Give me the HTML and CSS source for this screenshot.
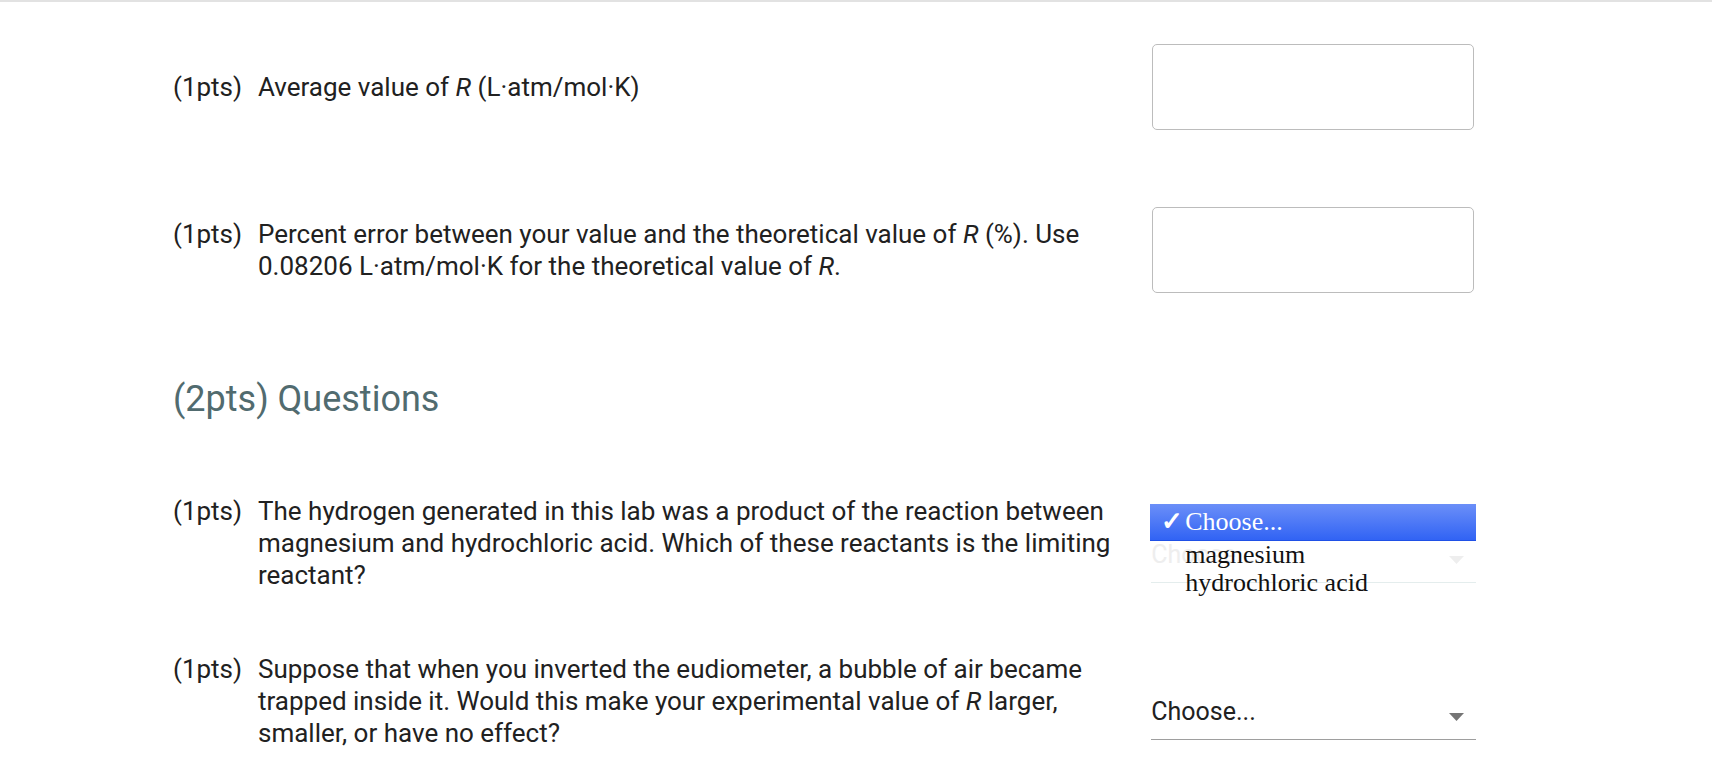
FILE: index.html
```html
<!DOCTYPE html>
<html lang="en">
<head>
  <meta charset="UTF-8">
  <meta name="viewport" content="width=device-width, initial-scale=1.0">
  <title>Lab Report - Molar Gas Constant</title>
  <link rel="stylesheet" href="styles.css">
</head>
<body>
  <div class="report">
    <!-- Calculations -->
    <div class="row row-first">
      <div class="question">
        <span class="points">(1pts)</span>
        <div class="prompt">Average value of <i>R</i> (L·atm/mol·K)</div>
      </div>
      <input type="text" class="answer-input">
    </div>

    <div class="row row-second">
      <div class="question">
        <span class="points">(1pts)</span>
        <div class="prompt">Percent error between your value and the theoretical value of <i>R</i> (%). Use 0.08206 L·atm/mol·K for the theoretical value of <i>R</i>.</div>
      </div>
      <input type="text" class="answer-input">
    </div>

    <!-- Questions -->
    <h2 class="section-title">(2pts) Questions</h2>

    <div class="row row-select row-third">
      <div class="question">
        <span class="points">(1pts)</span>
        <div class="prompt">The hydrogen generated in this lab was a product of the reaction between magnesium and hydrochloric acid. Which of these reactants is the limiting reactant?</div>
      </div>
      <div class="select select-open">
        <span class="select-value">Choose...</span>
        <svg class="select-arrow" width="15" height="8" viewBox="0 0 15 8"><path d="M0 0H15L7.5 8Z"/></svg>
        <div class="select-menu">
          <div class="menu-option menu-option-selected"><span class="check">✓</span>Choose...</div>
          <div class="menu-option">magnesium</div>
          <div class="menu-option">hydrochloric acid</div>
        </div>
      </div>
    </div>

    <div class="row row-select row-fourth">
      <div class="question">
        <span class="points">(1pts)</span>
        <div class="prompt">Suppose that when you inverted the eudiometer, a bubble of air became trapped inside it. Would this make your experimental value of <i>R</i> larger, smaller, or have no effect?</div>
      </div>
      <div class="select">
        <span class="select-value">Choose...</span>
        <svg class="select-arrow" width="15" height="8" viewBox="0 0 15 8"><path d="M0 0H15L7.5 8Z"/></svg>
      </div>
    </div>
  </div>
</body>
</html>
```

FILE: styles.css
```css
/* Base */
* {
  margin: 0;
  padding: 0;
  box-sizing: border-box;
}

body {
  font-family: Roboto, "Liberation Sans", sans-serif;
  color: #212121;
  background-color: #fff;
  border-top: 2px solid #e2e2e2;
}

.report {
  padding: 42px 0 0 173px;
  width: 1478px;
}

/* Question rows */
.row {
  display: flex;
  align-items: center;
  justify-content: space-between;
}

.row-second {
  margin-top: 77px;
}

.row-third {
  margin-top: 74px;
}

.row-fourth {
  margin-top: 62px;
}

.row-select {
  align-items: flex-end;
}

.question {
  display: flex;
  width: 979px;
  font-size: 26px;
  line-height: 32px;
}

.points {
  flex: 0 0 85px;
}

.prompt {
  flex: 1;
  padding-right: 14px;
}

.answer-input {
  width: 322px;
  height: 86px;
  margin-right: 4px;
  border: 1.5px solid #bcbcbc;
  border-radius: 5px;
  background-color: white;
  font-size: 20px;
}

.answer-input:focus {
  outline: none;
}

/* Section heading */
.section-title {
  margin-top: 85px;
  font-size: 36px;
  font-weight: 400;
  line-height: 43px;
  color: #516b6f;
}

/* Select */
.select {
  position: relative;
  width: 325px;
  padding: 8px 0 12px;
  margin: 0 2px 9px 0;
  border-bottom: 1px solid #9e9e9e;
  font-size: 25px;
  line-height: 30px;
  display: flex;
  align-items: center;
  justify-content: space-between;
}

.row-third .select {
  margin-bottom: 8px;
}

.select-arrow {
  margin: 10px 12px 0 0;
  fill: #757575;
}

.select-open {
  border-bottom-color: #e4eded;
  color: #eeeeee;
}

.select-open .select-arrow {
  fill: #eeeeee;
}

/* Open dropdown list */
.select-menu {
  position: absolute;
  top: -28px;
  left: -1px;
  width: 326px;
  font-family: "Liberation Serif", serif;
  font-size: 26px;
  color: #111;
}

.menu-option {
  padding-left: 35px;
  line-height: 28px;
  white-space: nowrap;
}

.menu-option-selected {
  position: relative;
  height: 37px;
  line-height: 36px;
  color: white;
  background: linear-gradient(#6b8ff8, #3163f4);
  border-bottom: 1px solid #1f50e6;
}

.check {
  position: absolute;
  left: 11px;
  font-weight: bold;
}
```
